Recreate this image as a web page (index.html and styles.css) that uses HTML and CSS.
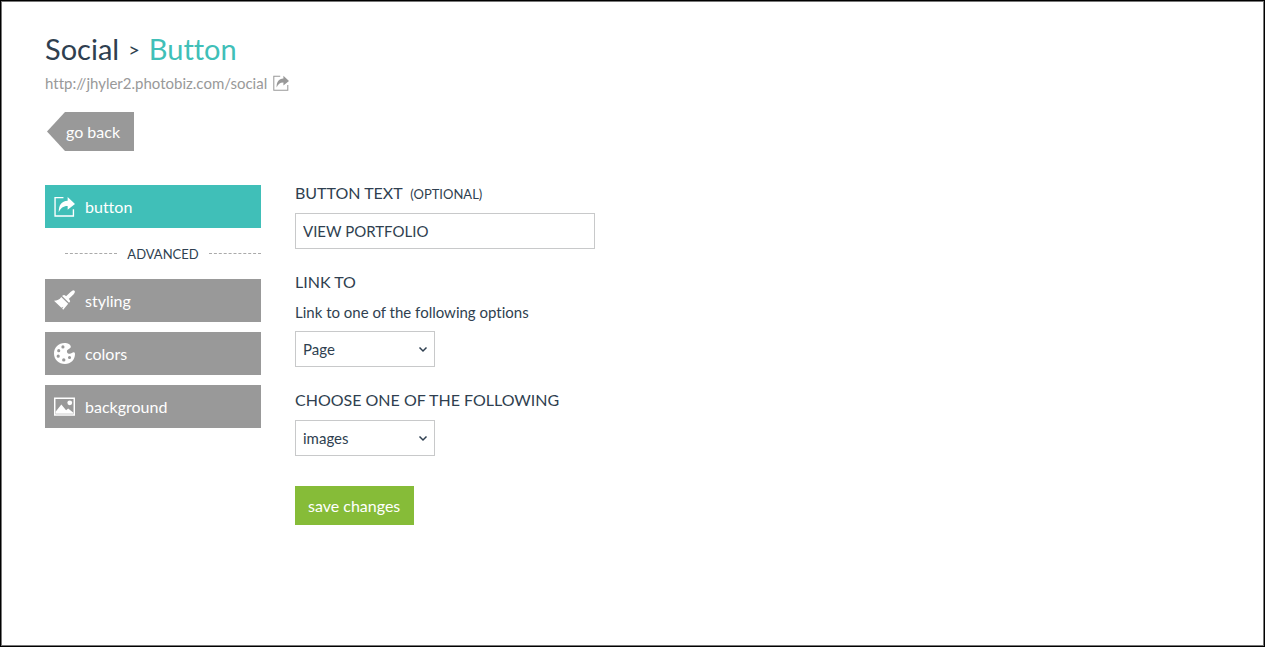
FILE: index.html
```html
<!DOCTYPE html>
<html lang="en">
<head>
<meta charset="utf-8">
<meta name="viewport" content="width=device-width, initial-scale=1">
<title>Social - Button</title>
<link rel="stylesheet" href="styles.css">
</head>
<body>
<svg class="defs" aria-hidden="true">
  <symbol id="share" viewBox="0 0 20 20">
    <path d="M9 1.500H1V19h17.500V12.500" fill="none" stroke="currentColor" stroke-width="1.300"/>
    <path d="M4.500 15.500C4.500 8.500 7 5 13 4.500V1l7 6.500-7 5.500V9.500C8.500 9.500 6.500 11.500 4.500 15.500z" fill="currentColor"/>
  </symbol>
</svg>
<div class="page">
  <header class="page-header">
    <h1 class="title">Social <span class="separator">&gt;</span> <span class="current">Button</span></h1>
    <a class="site-link" href="#">http://jhyler2.photobiz.com/social
      <svg class="link-icon" aria-hidden="true"><use href="#share"/></svg></a>
    <button class="back" type="button">go back</button>
  </header>
  <div class="columns">
    <nav class="sidebar">
      <a class="tab active" href="#"><svg class="icon" aria-hidden="true"><use href="#share"/></svg>button</a>
      <div class="divider">ADVANCED</div>
      <a class="tab" href="#"><svg class="icon" viewBox="0 0 20 20" aria-hidden="true">
        <path d="M11 6.500 15.800 1.800Q18.300-.6 19.500.6 20.600 2 18.500 4.200L13.500 9z" fill="#fff"/>
        <path d="M8.300 5.200Q9.600 4 11 5.400L14.800 9.200Q16 10.600 14.800 11.700L14.300 12.200 7.700 5.800zM6.900 6.600 13.500 13.200 8.800 18.800 7.800 17.900 9 16 7 16.900 0 10.300Q4.500 10.200 6.900 6.600z" fill="#fff"/>
      </svg>styling</a>
      <a class="tab" href="#"><svg class="icon" viewBox="0 0 20 20" aria-hidden="true">
        <path fill="#fff" fill-rule="evenodd" d="M10 0C13 0 16 1.500 16 3.500 16 5.500 12.300 5.500 12.300 8 12.300 10.500 15.500 10.800 17 9.500 18.300 8.500 20 8.500 20 10.500 20 16 16 20 10.500 20 4.500 20 0 16 0 10S4.500 0 10 0zM8.500 2.200a1.500 1.500 0 1 0 0 3 1.500 1.500 0 1 0 0-3zM4.500 5.800a1.500 1.500 0 1 0 0 3 1.500 1.500 0 1 0 0-3zM4 11a1.500 1.500 0 1 0 0 3 1.500 1.500 0 1 0 0-3zM9.300 14.500a1.600 1.600 0 1 0 0 3.200 1.600 1.600 0 1 0 0-3.200zM14.800 12.300a1.500 1.500 0 1 0 0 3 1.500 1.500 0 1 0 0-3z"/>
      </svg>colors</a>
      <a class="tab" href="#"><svg class="icon" viewBox="0 0 20 20" aria-hidden="true">
        <path d="M.7 2.200H19.300V18H.7z" fill="none" stroke="#fff" stroke-width="1.400"/>
        <circle cx="15" cy="6.500" r="2.300" fill="#fff"/>
        <path d="M1.500 17V15L7 8 11.500 13.500 13.500 12 18.500 16V17z" fill="#fff"/>
      </svg>background</a>
    </nav>
    <form class="form">
      <div class="field">
        <label class="label" for="text">BUTTON TEXT <span class="optional">(OPTIONAL)</span></label>
        <input class="control" id="text" type="text" value="VIEW PORTFOLIO">
      </div>
      <div class="field">
        <label class="label" for="link">LINK TO</label>
        <p class="hint">Link to one of the following options</p>
        <div class="select">
          <select class="control" id="link"><option>Page</option></select>
          <svg class="chevron" viewBox="0 0 8 5" aria-hidden="true"><path d="M.5.5 4 4 7.500.5"/></svg>
        </div>
      </div>
      <div class="field">
        <label class="label" for="choice">CHOOSE ONE OF THE FOLLOWING</label>
        <div class="select">
          <select class="control" id="choice"><option>images</option></select>
          <svg class="chevron" viewBox="0 0 8 5" aria-hidden="true"><path d="M.5.5 4 4 7.500.5"/></svg>
        </div>
      </div>
      <button class="save" type="button">save changes</button>
    </form>
  </div>
</div>
</body>
</html>
```
FILE: styles.css
```css
* { box-sizing: border-box; }
body {
  margin: 0;
  background: #fff;
  color: #2f3f50;
  font: 15px/20px Lato, sans-serif;
  font-variant-ligatures: none;
}
button, input, select {
  font: inherit;
  font-variant-ligatures: none;
  color: inherit;
}
a { color: inherit; text-decoration: none; }
.defs { position: absolute; width: 0; height: 0; }
.page {
  min-height: 100vh;
  padding: 28px 43px;
  border: 1px solid #000;
  outline: 1px solid #777;
  outline-offset: -2px;
}
.page-header {
  display: flex;
  flex-direction: column;
  align-items: flex-start;
  padding-left: 1px;
}
.title {
  display: flex;
  align-items: center;
  gap: 9px;
  margin: 0;
  font-size: 29px;
  line-height: 40px;
  font-weight: 400;
}
.separator { font-size: 20px; }
.current { color: #40bfb8; }
.site-link {
  display: flex;
  align-items: center;
  gap: 6px;
  margin-top: 4px;
  color: #999;
}
.link-icon { width: 16px; height: 16px; }
.back {
  height: 39px;
  margin: 19px 0 0 2px;
  padding: 0 14px 0 19px;
  border: 0;
  background: #999;
  color: #fff;
  font-size: 16px;
  clip-path: polygon(18px 0, 100% 0, 100% 100%, 18px 100%, 0 50%);
}
.columns {
  display: flex;
  gap: 34px;
  margin-top: 34px;
  padding-left: 1px;
}
.sidebar {
  display: flex;
  flex-direction: column;
  gap: 10px;
  flex: 0 0 216px;
}
.tab {
  display: flex;
  align-items: center;
  gap: 10px;
  height: 43px;
  padding: 0 9px;
  background: #999;
  color: #fff;
  font-size: 16px;
}
.active { background: #40bfb8; }
.icon { width: 21px; height: 21px; }
.divider {
  display: flex;
  align-items: center;
  gap: 10px;
  height: 31px;
  padding-left: 20px;
  font-size: 13px;
}
.divider::before, .divider::after {
  content: "";
  flex: 1;
  border-top: 1px dashed #aaa;
}
.form { flex: 1; max-width: 300px; }
.field { margin-bottom: 23px; }
.label {
  display: block;
  margin-bottom: 10px;
  font-size: 16px;
  line-height: 20px;
  white-space: nowrap;
}
.field:first-child { margin-top: -2px; }
.optional {
  margin-left: 4px;
  font-size: 13px;
  line-height: 1;
}
.hint { margin: 0 0 9px; }
.control {
  display: block;
  width: 100%;
  height: 36px;
  padding: 0 7px;
  border: 1px solid #c8c9ca;
  border-radius: 0;
  background: #fff;
  appearance: none;
}
.select { position: relative; width: 140px; }
.chevron {
  position: absolute;
  top: 16px;
  right: 8px;
  width: 8px;
  height: 5px;
  overflow: visible;
  fill: none;
  stroke: #2f3f50;
  stroke-width: 1.5;
  pointer-events: none;
}
.save {
  height: 39px;
  margin-top: 7px;
  padding: 0 14px 0 13px;
  border: 0;
  background: #86bc38;
  color: #fff;
  font-size: 16px;
}
```
